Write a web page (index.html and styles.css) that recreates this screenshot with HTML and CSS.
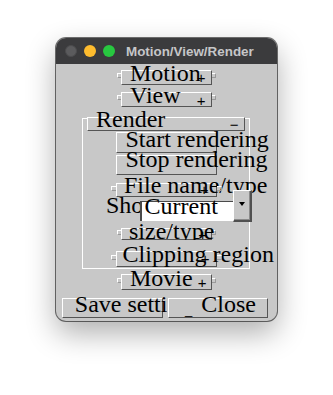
FILE: index.html
```html
<!DOCTYPE html>
<html>
<head>
<meta charset="utf-8">
<title>Motion/View/Render</title>
<link rel="stylesheet" href="styles.css">
</head>
<body>
<div class="window">
  <div class="titlebar">
    <span class="light light-close"></span>
    <span class="light light-min"></span>
    <span class="light light-max"></span>
    <span class="title">Motion/View/Render</span>
  </div>
  <div class="content">
    <div class="fold fold-motion">
      <span class="nub nub-left"></span>
      <div class="btn btn-fold"><span class="caption cap-motion">Motion</span><span class="sign sign-motion">+</span></div>
      <span class="nub nub-right"></span>
    </div>
    <div class="fold fold-view">
      <span class="nub nub-left"></span>
      <div class="btn btn-fold"><span class="caption cap-view">View</span><span class="sign sign-view">+</span></div>
      <span class="nub nub-right"></span>
    </div>
    <div class="group">
      <div class="btn group-head"><span class="caption cap-render">Render</span><span class="sign sign-render">&#8722;</span></div>
      <div class="btn action action-start"><span class="caption cap-start">Start rendering</span></div>
      <div class="btn action action-stop"><span class="caption cap-stop">Stop rendering</span></div>
      <div class="fold fold-file">
        <span class="nub nub-wide nub-left"></span>
        <div class="btn btn-wide"><span class="caption cap-file">File name/type</span><span class="sign sign-file">+</span></div>
        <span class="nub nub-wide nub-right"></span>
      </div>
      <div class="show-row">
        <span class="show-label">Show</span>
        <div class="entry"><span class="caption cap-entry">Current</span></div>
        <div class="dropdown"><span class="arrow"></span></div>
      </div>
      <div class="fold fold-size">
        <span class="nub nub-left"></span>
        <div class="btn btn-fold btn-clipped"><span class="caption cap-size">size/type</span><span class="sign sign-size">+</span></div>
        <span class="nub nub-right"></span>
      </div>
      <div class="fold fold-clip">
        <span class="nub nub-wide nub-left"></span>
        <div class="btn btn-wide"><span class="caption cap-clip">Clipping region</span><span class="sign sign-clip">+</span></div>
        <span class="nub nub-wide nub-right"></span>
      </div>
    </div>
    <div class="fold fold-movie">
      <span class="nub nub-left"></span>
      <div class="btn btn-fold"><span class="caption cap-movie">Movie</span><span class="sign sign-movie">+</span></div>
      <span class="nub nub-right"></span>
    </div>
    <div class="actions">
      <div class="btn btn-save"><span class="caption cap-save">Save settings</span></div>
      <div class="btn btn-close"><span class="mnemonic">_</span><span class="caption cap-close">Close</span></div>
    </div>
  </div>
</div>
</body>
</html>
```

FILE: styles.css
```css
html, body {
  margin: 0;
  padding: 0;
  background: #ffffff;
}

body {
  width: 333px;
  height: 395px;
  overflow: hidden;
}

.window {
  margin: 38px 0 0 56px;
  width: 221px;
  height: 283px;
  border-radius: 10px;
  background: #c8c8c8;
  overflow: hidden;
  box-shadow: 0 12px 30px rgba(0, 0, 0, 0.32), 0 0 0 1px rgba(0, 0, 0, 0.55);
}

/* ---------- title bar ---------- */
.titlebar {
  height: 26px;
  background: #3b3b3d;
  display: flex;
  align-items: center;
  padding-left: 9px;
}

.light {
  width: 12px;
  height: 12px;
  border-radius: 50%;
  box-sizing: border-box;
  flex: none;
  margin-right: 7px;
}

.light-close {
  background: #5b5b5d;
  border: 1px solid #4c4c4e;
}

.light-min {
  background: #febc2e;
}

.light-max {
  background: #28c840;
  margin-right: 0;
}

.title {
  margin-left: 11px;
  font-family: "Liberation Sans", Arial, sans-serif;
  font-weight: bold;
  font-size: 13.4px;
  color: #c6c6c8;
  white-space: nowrap;
}

/* ---------- content ---------- */
.content {
  font-family: "Liberation Serif", "Times New Roman", serif;
  font-size: 24px;
  color: #000;
}

.btn {
  box-sizing: border-box;
  border: 1px solid;
  border-color: #ffffff #555555 #555555 #ffffff;
  background: #c8c8c8;
  display: flex;
  align-items: flex-start;
  flex: none;
}

.caption {
  display: block;
  flex: none;
  width: 0;
  height: 24px;
  line-height: 24px;
  white-space: nowrap;
}

.sign {
  display: block;
  flex: none;
  margin-left: auto;
  font-family: "Liberation Sans", Arial, sans-serif;
  font-size: 15px;
  line-height: 15px;
  height: 15px;
}

/* collapsible rows: frame nubs + header button */
.fold {
  display: flex;
  align-items: flex-start;
}

.nub {
  flex: none;
  box-sizing: border-box;
  width: 4px;
  height: 5px;
  margin-top: 3px;
  border: 1px solid #ffffff;
  border-bottom-color: #9a9a9a;
}

.nub-left {
  border-right: none;
}

.nub-right {
  border-left: none;
  border-right-color: #9a9a9a;
}

.nub-wide {
  width: 5px;
}

.btn-fold {
  width: 91px;
}

.btn-wide {
  width: 101px;
}

.fold-motion {
  margin: 6px 0 0 61px;
  height: 15px;
}
.fold-motion .btn { height: 15px; }
.cap-motion { margin: -9.6px 0 0 8px; }
.sign-motion { margin-top: -1px; margin-right: 5.5px; }

.fold-view {
  margin: 7px 0 0 61px;
  height: 15px;
}
.fold-view .btn { height: 15px; }
.cap-view { margin: -9.8px 0 0 8px; }
.sign-view { margin-top: 0; margin-right: 5.5px; }

/* Render group */
.group {
  box-sizing: border-box;
  margin: 11px 0 0 26px;
  width: 168px;
  height: 151px;
  border: 1px solid #ffffff;
}

.group-head {
  margin: -2px 0 0 4px;
  width: 158px;
  height: 14px;
}
.cap-render { margin: -11.4px 0 0 8px; }
.sign-render { margin-top: -1.5px; margin-right: 5.5px; }

.action {
  margin-left: 33px;
  width: 101px;
}

.action-start {
  margin-top: 1px;
  height: 21px;
}
.cap-start { margin: -6.4px 0 0 8.5px; }

.action-stop {
  margin-top: 2px;
  height: 20px;
}
.cap-stop { margin: -9.1px 0 0 8.5px; }

.fold-file {
  margin: 8px 0 0 28px;
  height: 14px;
}
.fold-file .btn { height: 14px; }
.cap-file { margin: -10.8px 0 0 7px; }
.sign-file { margin-top: -2px; margin-right: 7.5px; }

.show-row {
  display: flex;
  align-items: flex-start;
  margin: -7px 0 0 23px;
  height: 32px;
}

.show-label {
  flex: none;
  display: block;
  width: 34px;
  height: 24px;
  line-height: 24px;
  margin-top: 3.4px;
  overflow: hidden;
  white-space: nowrap;
}

.entry {
  flex: none;
  box-sizing: border-box;
  width: 93px;
  height: 20px;
  margin-top: 11px;
  background: #ffffff;
  border-top: 1px solid #4a4a4a;
  border-left: 2px solid #4a4a4a;
  display: flex;
  align-items: flex-start;
}
.cap-entry { margin: -7.6px 0 0 2.6px; }

.dropdown {
  flex: none;
  box-sizing: border-box;
  width: 19px;
  height: 32px;
  border-style: solid;
  border-width: 1px 2px 2px 1px;
  border-color: #ffffff #505050 #505050 #ffffff;
  box-shadow: inset -1px -1px 0 #8a8a8a;
  background: #c8c8c8;
  display: flex;
  align-items: center;
  justify-content: center;
}

.arrow {
  width: 0;
  height: 0;
  margin-top: -3px;
  border-left: 3.5px solid transparent;
  border-right: 3.5px solid transparent;
  border-top: 4px solid #000;
}

.fold-size {
  margin: 6px 0 0 34px;
  height: 12px;
}
.fold-size .btn { height: 12px; }
.fold-size .nub { margin-top: 2px; }
.btn-clipped {
  clip-path: inset(-40px -120px 0 -40px);
}
.cap-size { margin: -10.1px 0 0 7px; }
.sign-size { margin-top: -2px; margin-right: 4px; }

.fold-clip {
  margin: 11px 0 0 28px;
  height: 16px;
}
.fold-clip .btn { height: 16px; }
.fold-clip .nub { margin-top: 4px; }
.cap-clip { margin: -10.1px 0 0 5.6px; }
.sign-clip { margin-top: -1.4px; margin-right: 6.5px; }

.fold-movie {
  margin: 5px 0 0 61px;
  height: 16px;
}
.fold-movie .btn { height: 16px; }
.fold-movie .nub { margin-top: 4px; }
.cap-movie { margin: -9.1px 0 0 8px; }
.sign-movie { margin-top: -0.4px; margin-right: 4.5px; }

/* bottom buttons */
.actions {
  display: flex;
  align-items: flex-start;
  gap: 5px;
  margin: 8px 0 0 6px;
  height: 20px;
}

.btn-save {
  width: 101px;
  height: 20px;
}
.cap-save {
  width: 92.7px;
  overflow: hidden;
  margin: -7.1px 0 0 11.8px;
}

.btn-close {
  width: 100px;
  height: 20px;
}

.mnemonic {
  display: block;
  flex: none;
  font-family: "Liberation Sans", Arial, sans-serif;
  font-size: 13px;
  line-height: 13px;
  height: 13px;
  margin: 3.5px 0 0 16px;
}
.cap-close { margin: -7.1px 0 0 9px; }
```
